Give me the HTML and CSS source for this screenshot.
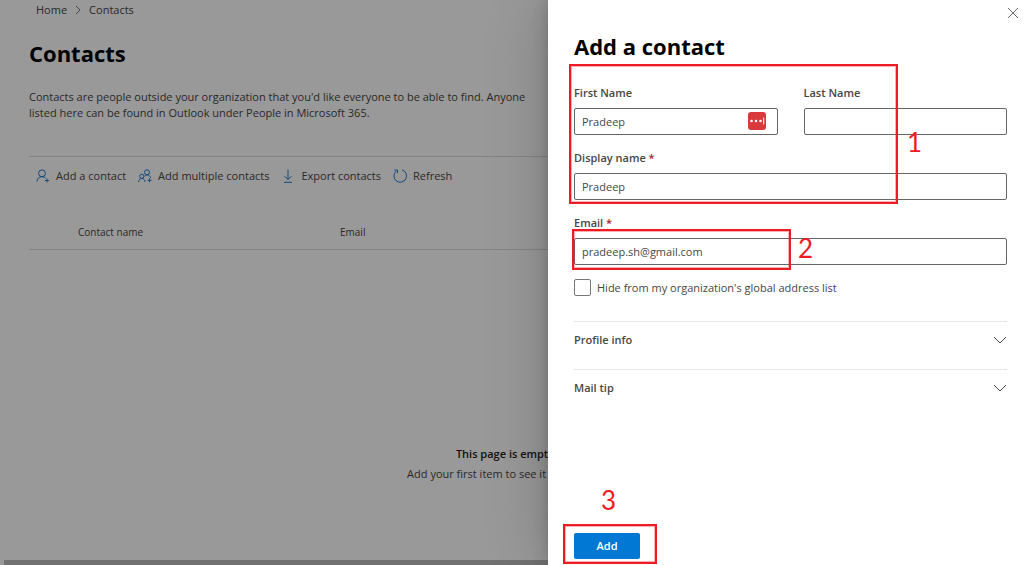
FILE: index.html
```html
<!DOCTYPE html>
<html lang="en">
<head>
<meta charset="utf-8">
<title>Contacts</title>
<link rel="stylesheet" href="styles.css">
</head>
<body>
<main class="page">
  <nav class="breadcrumb" aria-label="Breadcrumb">
    <a href="#">Home</a>
    <svg class="crumb-sep" viewBox="0 0 6 10"><path d="M1 1l4 4-4 4"/></svg>
    <a href="#">Contacts</a>
  </nav>
  <h1 class="page-title">Contacts</h1>
  <p class="intro">Contacts are people outside your organization that you'd like everyone to be able to find. Anyone listed here can be found in Outlook under People in Microsoft 365.</p>
  <div class="toolbar">
    <button class="command" type="button">
      <svg class="icon" viewBox="0 0 14 14"><circle cx="6" cy="4.3" r="3.4"/><path d="M1 12.5c0-2.900 2-4.800 5-4.800 1.500 0 2.700.5 3.500 1.300M11 9.500v4M9 11.500h4"/></svg>
      <span>Add a contact</span>
    </button>
    <button class="command" type="button">
      <svg class="icon" viewBox="0 0 14 14"><circle cx="9" cy="3.300" r="2.500"/><circle cx="3.800" cy="7.300" r="2.100"/><path d="M.7 13c0-2.200 1.200-3.600 3.100-3.600S6.900 10.800 6.900 13M6.200 7.400c.7-1 1.600-1.500 2.800-1.500 1.900 0 3.300 1.200 3.600 3M11.500 9.300v4M9.500 11.300h4"/></svg>
      <span>Add multiple contacts</span>
    </button>
    <button class="command" type="button">
      <svg class="icon" viewBox="0 0 14 14"><path d="M7 .5v10M3.600 7.200L7 10.600l3.400-3.400M3 13.300h8"/></svg>
      <span>Export contacts</span>
    </button>
    <button class="command" type="button">
      <svg class="icon" viewBox="0 0 14 14"><path d="M9 .9A6.300 6.300 0 1 1 3.200 2.100M1.300 1h3.200v3.200"/></svg>
      <span>Refresh</span>
    </button>
  </div>
  <table class="contacts">
    <thead><tr><th class="col-name" scope="col">Contact name</th><th scope="col">Email</th></tr></thead>
  </table>
  <div class="empty">
    <strong>This page is empty.</strong>
    <span>Add your first item to see it listed here.</span>
  </div>
  <div class="scroll-track"></div>
</main>
<div class="scrim"></div>
<aside class="panel" aria-labelledby="panel-title">
  <button class="close" type="button" aria-label="Close"><svg viewBox="0 0 12 12"><path d="M1 1l10 10M11 1L1 11"/></svg></button>
  <h2 class="panel-title" id="panel-title">Add a contact</h2>
  <form class="form">
    <div class="row">
      <div class="field">
        <label for="first">First Name</label>
        <div class="input-wrap">
          <input id="first" type="text" value="Pradeep">
          <svg class="badge" viewBox="0 0 18 18"><rect width="18" height="18" rx="3" fill="#d9393b"/><g fill="#fff"><circle cx="3.500" cy="9" r="1.300"/><circle cx="8" cy="9" r="1.300"/><circle cx="12.500" cy="9" r="1.300"/><path d="M15.200 5.500h1v7h-1z"/></g></svg>
        </div>
      </div>
      <div class="field">
        <label for="last">Last Name</label>
        <input id="last" type="text">
      </div>
    </div>
    <div class="field">
      <label for="display">Display name <span class="required">*</span></label>
      <input id="display" type="text" value="Pradeep">
    </div>
    <div class="field">
      <label for="email">Email <span class="required">*</span></label>
      <input id="email" type="email" value="pradeep.sh@gmail.com">
    </div>
    <div class="check">
      <input id="hide" type="checkbox">
      <label for="hide">Hide from my organization's global address list</label>
    </div>
  </form>
  <div class="sections">
    <button class="section" type="button"><span>Profile info</span><svg viewBox="0 0 14 8"><path d="M1 1l6 6 6-6"/></svg></button>
    <button class="section" type="button"><span>Mail tip</span><svg viewBox="0 0 14 8"><path d="M1 1l6 6 6-6"/></svg></button>
  </div>
  <div class="footer"><button class="primary" type="button">Add</button></div>
  <div class="mark mark-names"></div><span class="step step-1">1</span>
  <div class="mark mark-email"></div><span class="step step-2">2</span>
  <div class="mark mark-add"></div><span class="step step-3">3</span>
</aside>
</body>
</html>
```
FILE: styles.css
```css
* { box-sizing: border-box; }

body {
  margin: 0;
  position: relative;
  height: 100vh;
  overflow: hidden;
  background: #fff;
  color: #484644;
  font-family: "Open Sans", "Noto Sans", sans-serif;
  font-size: 11px;
  line-height: 16px;
}

button, input {
  font: inherit;
  color: inherit;
}

button {
  border: 0;
  background: none;
  padding: 0;
  cursor: pointer;
}

svg {
  display: block;
  flex: none;
  fill: none;
  stroke: currentColor;
}

a { color: inherit; text-decoration: none; }

.page {
  display: flex;
  flex-direction: column;
  height: 100%;
  padding-left: 29px;
}

.breadcrumb {
  display: flex;
  align-items: center;
  gap: 8px;
  padding: 2px 0 0 7px;
}

.crumb-sep { width: 6px; height: 10px; color: #777; }

.page-title, .panel-title {
  margin: 0;
  color: #000;
  font-size: 22px;
  line-height: 32px;
  font-weight: 700;
}

.page-title { margin-top: 19px; }

.intro {
  max-width: 510px;
  margin: 20px 0 0;
}

.toolbar {
  display: flex;
  align-items: center;
  gap: 12px;
  height: 38px;
  margin-top: 35px;
  padding-left: 7px;
  border-top: 1px solid #dcdcdc;
}

.command {
  display: flex;
  align-items: center;
  gap: 6px;
}

.icon { width: 14px; height: 14px; color: #2079cc; }

.contacts {
  width: 100%;
  margin-top: 21px;
  border-collapse: collapse;
  font-size: 10px;
  border-bottom: 1px solid #dcdcdc;
}

.contacts th {
  height: 34px;
  padding: 0;
  text-align: left;
  font-weight: 400;
}

.contacts .col-name { width: 311px; padding-left: 49px; }

.empty {
  display: flex;
  flex-direction: column;
  align-items: center;
  gap: 4px;
  margin: auto 40px 78px 0;
}

.empty strong { font-weight: 600; color: #222; }

.scroll-track {
  height: 5px;
  margin-left: -25px;
  background: #bcbcbc;
}

.scrim {
  position: absolute;
  inset: 0;
  background: rgba(0, 0, 0, 0.4);
}

.panel {
  position: absolute;
  inset: 0 0 0 auto;
  width: 476px;
  display: flex;
  flex-direction: column;
  padding: 7px 17px 6px 26px;
  background: #fff;
  box-shadow: 0 0 58px rgba(0, 0, 0, 0.22), 0 0 14px rgba(0, 0, 0, 0.18);
}

.close {
  align-self: flex-end;
  margin-right: -12px;
  color: #666;
}

.close svg { width: 12px; height: 12px; }

.panel-title { margin-top: 11px; }

.form {
  display: flex;
  flex-direction: column;
  gap: 14px;
  margin-top: 22px;
}

.row {
  display: grid;
  grid-template-columns: 1fr 1fr;
  gap: 26px;
}

.field {
  display: flex;
  flex-direction: column;
  gap: 6px;
}

.field label { line-height: 18px; font-weight: 600; }

.required { color: #a4262c; }

.field input {
  width: 100%;
  height: 27px;
  padding: 0 7px;
  border: 1px solid #666;
  border-radius: 2px;
  background: #fff;
}

.input-wrap { position: relative; }

.badge {
  position: absolute;
  top: 4px;
  right: 12px;
  width: 18px;
  height: 18px;
  stroke: none;
}

.check {
  display: flex;
  align-items: center;
  gap: 6px;
}

.check input {
  appearance: none;
  width: 17px;
  height: 17px;
  margin: 0;
  border: 1px solid #777;
  border-radius: 2px;
}

.sections { margin-top: 25px; }

.section {
  display: flex;
  justify-content: space-between;
  align-items: center;
  width: 100%;
  height: 48px;
  padding-bottom: 12px;
  border-top: 1px solid #e6e6e6;
  font-weight: 600;
}

.section svg { width: 14px; height: 8px; }

.footer { margin-top: auto; }

.primary {
  display: block;
  width: 66px;
  height: 26px;
  border-radius: 2px;
  background: #0078d4;
  color: #fff;
  font-weight: 600;
}

.mark {
  position: absolute;
  border: 2px solid #ed1c24;
  box-shadow: inset 0 0 0 1px rgba(237, 28, 36, 0.35);
  pointer-events: none;
}

.mark-names { top: 64px; left: 21px; width: 329px; height: 140px; }
.mark-email { top: 229px; left: 24px; width: 219px; height: 41px; }
.mark-add { bottom: 1px; left: 15px; width: 94px; height: 40px; }

.step {
  position: absolute;
  color: #ed1c24;
  font-family: Lato, sans-serif;
  font-size: 26px;
  line-height: 32px;
}

.step-1 { top: 126px; left: 359px; }
.step-2 { top: 232px; left: 250px; }
.step-3 { bottom: 49px; left: 53px; }
```
